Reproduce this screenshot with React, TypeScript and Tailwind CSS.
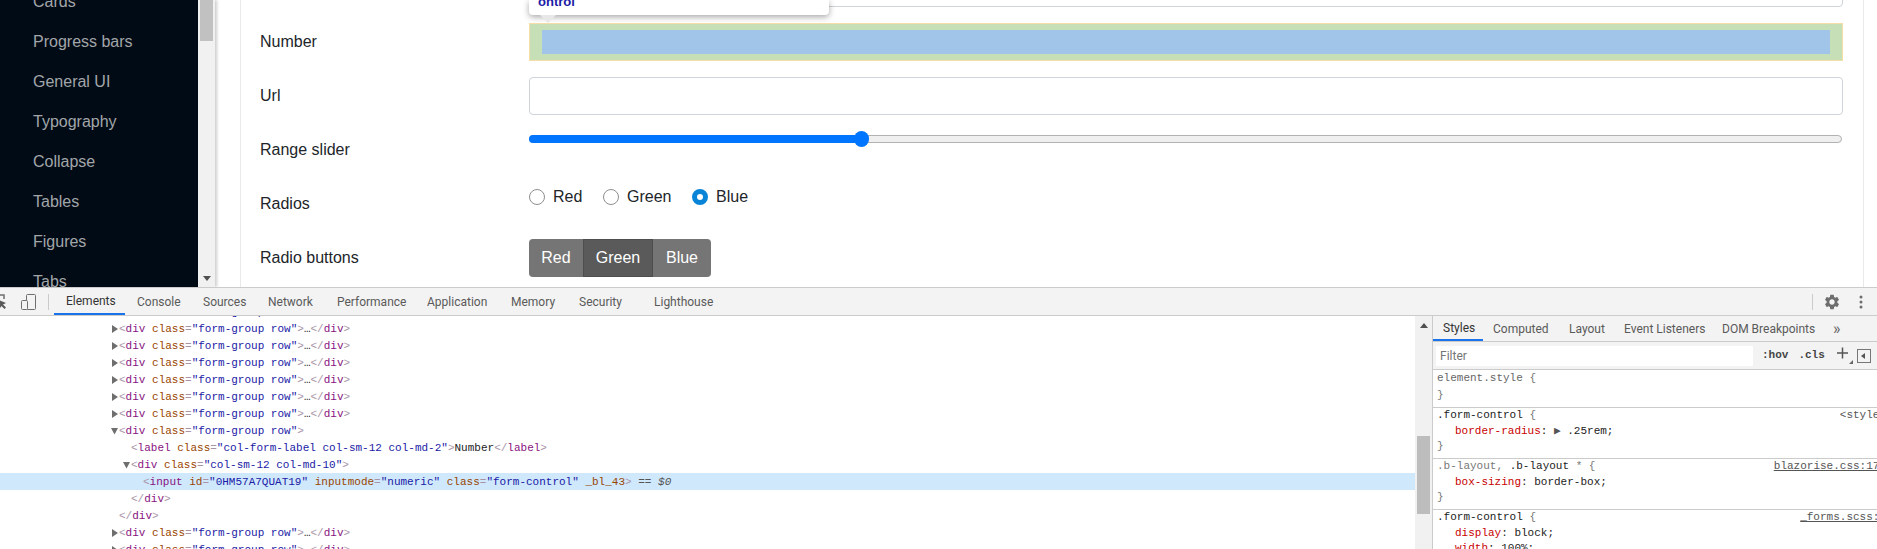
import React from "react";
import { MdSettings } from "react-icons/md";

const navItems = ["Cards", "Progress bars", "General UI", "Typography", "Collapse", "Tables", "Figures", "Tabs"];

const Caret = ({ open }: { open?: boolean }) => (
  <svg width="8" height="10" viewBox="0 0 8 10" className="shrink-0">
    {open ? <polygon points="0,2 7,2 3.5,8.5" fill="#6e6e6e" /> : <polygon points="1,1 7,5 1,9" fill="#6e6e6e" />}
  </svg>
);

const FormRow = ({ label, children }: { label: string; children?: React.ReactNode }) => (
  <div className="flex h-[38px] mb-4">
    <label className="w-[269px] shrink-0 pt-[7px] leading-6 text-[#212529]">{label}</label>
    <div className="flex-1 min-w-0">{children}</div>
  </div>
);

const TextBox = () => <div className="h-[38px] rounded border border-[#ced4da] bg-white" />;

const Radio = ({ label, checked, className }: { label: string; checked?: boolean; className: string }) => (
  <div className={`flex items-center h-6 ${className}`}>
    <span
      className={
        checked
          ? "w-4 h-4 rounded-full border-[5px] border-[#0a84d6] bg-white"
          : "w-4 h-4 rounded-full border border-[#8f8f8f] bg-white"
      }
    />
    <span className="ml-2 text-[#212529]">{label}</span>
  </div>
);

const Br = ({ children }: { children: React.ReactNode }) => <span className="text-[#a894a6]">{children}</span>;
const Tag = ({ children }: { children: React.ReactNode }) => <span className="text-[#881280]">{children}</span>;
const Attr = ({ children }: { children: React.ReactNode }) => <span className="text-[#994500]">{children}</span>;
const Val = ({ children }: { children: React.ReactNode }) => <span className="text-[#1a1aa6]">{children}</span>;

const TreeLine = ({ indent, children, caret, selected }: { indent: string; children: React.ReactNode; caret?: "open" | "closed"; selected?: boolean }) => (
  <div className={`flex items-center h-[17px] whitespace-pre ${indent} ${selected ? "bg-[#cfe8fc]" : ""}`}>
    {caret ? <Caret open={caret === "open"} /> : <span className="w-2 shrink-0" />}
    <span className="pt-px">{children}</span>
  </div>
);

const ClosedGroup = () => (
  <TreeLine indent="pl-[111px]" caret="closed">
    <Br>&lt;</Br><Tag>div</Tag> <Attr>class</Attr><Br>=</Br><Val>"form-group row"</Val><Br>&gt;</Br>…<Br>&lt;/</Br><Tag>div</Tag><Br>&gt;</Br>
  </TreeLine>
);

const tabs = [
  { name: "Elements", w: "w-[71px]", active: true },
  { name: "Console", w: "w-[66px]" },
  { name: "Sources", w: "w-[65px]" },
  { name: "Network", w: "w-[69px]" },
  { name: "Performance", w: "w-[90px]" },
  { name: "Application", w: "w-[84px]" },
  { name: "Memory", w: "w-[68px]" },
  { name: "Security", w: "w-[75px]" },
  { name: "Lighthouse", w: "w-[84px]" },
];

const sideTabs = [
  { name: "Styles", w: "w-[50px]", active: true },
  { name: "Computed", w: "w-[76px]" },
  { name: "Layout", w: "w-[55px]" },
  { name: "Event Listeners", w: "w-[98px]" },
  { name: "DOM Breakpoints", w: "w-[110px]" },
];

const Brace = ({ children }: { children: React.ReactNode }) => <span className="text-[#777]">{children}</span>;
const Prop = ({ children }: { children: React.ReactNode }) => <span className="text-[#c80000]">{children}</span>;

const Source = ({ children }: { children: React.ReactNode }) => (
  <span className="ml-auto mr-[-9px] text-[#555] underline">{children}</span>
);

export default function App() {
  return (
    <div className="w-full h-screen overflow-hidden flex flex-col bg-white font-['Liberation_Sans',Arial,sans-serif]">
      {/* page being inspected */}
      <div className="h-[287px] shrink-0 flex overflow-hidden">
        <div className="w-[198px] shrink-0 bg-[#000b16] text-[#a3a6a9]">
          <div className="mt-[-18px] pl-[33px]">
            {navItems.map((item) => (
              <div key={item} className="h-10 flex items-center">{item}</div>
            ))}
          </div>
        </div>
        <div className="w-[17px] shrink-0 bg-[#f1f1f1] flex flex-col items-center shadow-[2px_0_3px_rgba(0,0,0,0.2)]">
          <div className="w-[13px] h-[41px] bg-[#c1c1c1]" />
          <svg width="8" height="5" viewBox="0 0 8 5" className="mt-auto mb-[6px]">
            <polygon points="0,0 8,0 4,5" fill="#505050" />
          </svg>
        </div>
        <div className="relative flex-1 min-w-0 ml-[25px] mr-[13px] border-x border-[#e9e9e9] pl-[19px] pr-[20px]">
          <div className="mt-[-31px]">
            <FormRow label="Text"><TextBox /></FormRow>
            <FormRow label="Number">
              <div className="h-[38px] border border-[#f6dfa6] bg-[#c6dfb6] px-3 py-[6px]">
                <div className="h-6 bg-[#a1c5e9]" />
              </div>
            </FormRow>
            <FormRow label="Url"><TextBox /></FormRow>
            <FormRow label="Range slider">
              <div className="relative h-2 mt-1 mr-px rounded border border-[#b2b2b2] bg-[#efefef]">
                <div className="w-[332px] h-2 -mt-px -ml-px rounded-l bg-[#0075ff]" />
                <div className="absolute left-[324px] top-[-5px] w-[15px] h-4 rounded-full bg-[#0075ff]" />
              </div>
            </FormRow>
            <FormRow label="Radios">
              <div className="flex">
                <Radio label="Red" className="w-[74px]" />
                <Radio label="Green" className="w-[89px]" />
                <Radio label="Blue" checked className="" />
              </div>
            </FormRow>
            <FormRow label="Radio buttons">
              <div className="flex h-[38px] w-fit text-white">
                <div className="w-[54px] flex items-center justify-center rounded-l bg-[#757575]">Red</div>
                <div className="w-[70px] flex items-center justify-center border border-[#4e4e4e] bg-[#5a5a5a]">Green</div>
                <div className="w-[58px] flex items-center justify-center rounded-r bg-[#757575]">Blue</div>
              </div>
            </FormRow>
          </div>
          {/* inspector tooltip */}
          <div className="absolute left-[288px] top-0 w-[300px] h-[15px] rounded-b bg-white shadow-[0_2px_6px_rgba(0,0,0,0.35)] overflow-hidden">
            <div className="absolute left-[9px] bottom-[7px] text-[13px] leading-3 font-bold text-[#1a1aa6]">ontrol</div>
          </div>
          <svg width="16" height="8" viewBox="0 0 16 8" className="absolute left-[299px] top-[15px]">
            <polygon points="0,0 16,0 8,8" fill="#e8e8e8" />
          </svg>
        </div>
      </div>

      {/* devtools toolbar */}
      <div className="h-[29px] shrink-0 flex items-center border-y border-[#cbcbcb] bg-[#f3f3f3] font-['Roboto',sans-serif] text-xs text-[#5a5a5a]">
        <svg width="16" height="16" viewBox="0 0 16 16" className="ml-[-8px] shrink-0">
          <path d="M1 1h11v4" fill="none" stroke="#6e6e6e" strokeWidth="1.5" />
          <path d="M7 6l7 3-3 1.5 3 3-1.5 1.5-3-3L8 14z" fill="#5a5a5a" />
        </svg>
        <svg width="16" height="16" viewBox="0 0 16 16" className="ml-[13px] shrink-0">
          <rect x="5.5" y="0.5" width="9" height="15" rx="1" fill="none" stroke="#6e6e6e" />
          <rect x="0.5" y="6.5" width="6" height="9" rx="1" fill="#f3f3f3" stroke="#6e6e6e" />
        </svg>
        <div className="ml-[11px] w-px h-4 bg-[#cbcbcb]" />
        <div className="ml-[5px] flex h-full">
          {tabs.map((t) => (
            <div
              key={t.name}
              className={`${t.w} px-3 flex items-center whitespace-nowrap ${t.active ? "border-b-2 border-[#1a73e8] text-[#333]" : ""}`}
            >
              {t.name}
            </div>
          ))}
        </div>
        <div className="ml-auto w-px h-4 bg-[#cbcbcb]" />
        <MdSettings className="ml-[10px] w-[18px] h-[18px] text-[#6e6e6e]" />
        <svg width="4" height="14" viewBox="0 0 4 14" className="ml-[18px] mr-[14px]">
          <circle cx="2" cy="2" r="1.5" fill="#6e6e6e" />
          <circle cx="2" cy="7" r="1.5" fill="#6e6e6e" />
          <circle cx="2" cy="12" r="1.5" fill="#6e6e6e" />
        </svg>
      </div>

      {/* devtools body */}
      <div className="flex-1 min-h-0 flex overflow-hidden">
        <div className="w-[1415px] shrink-0 overflow-hidden font-['Liberation_Mono',monospace] text-[11px] text-[#222]">
          <div className="mt-[-13px]">
            <ClosedGroup />
            <ClosedGroup />
            <ClosedGroup />
            <ClosedGroup />
            <ClosedGroup />
            <ClosedGroup />
            <ClosedGroup />
            <TreeLine indent="pl-[111px]" caret="open">
              <Br>&lt;</Br><Tag>div</Tag> <Attr>class</Attr><Br>=</Br><Val>"form-group row"</Val><Br>&gt;</Br>
            </TreeLine>
            <TreeLine indent="pl-[123px]">
              <Br>&lt;</Br><Tag>label</Tag> <Attr>class</Attr><Br>=</Br><Val>"col-form-label col-sm-12 col-md-2"</Val><Br>&gt;</Br>Number<Br>&lt;/</Br><Tag>label</Tag><Br>&gt;</Br>
            </TreeLine>
            <TreeLine indent="pl-[123px]" caret="open">
              <Br>&lt;</Br><Tag>div</Tag> <Attr>class</Attr><Br>=</Br><Val>"col-sm-12 col-md-10"</Val><Br>&gt;</Br>
            </TreeLine>
            <TreeLine indent="pl-[135px]" selected>
              <Br>&lt;</Br><Tag>input</Tag> <Attr>id</Attr><Br>=</Br><Val>"0HM57A7QUAT19"</Val> <Attr>inputmode</Attr><Br>=</Br><Val>"numeric"</Val> <Attr>class</Attr><Br>=</Br><Val>"form-control"</Val> <Attr>_bl_43</Attr><Br>&gt;</Br><span className="text-[#555]"> == <i>$0</i></span>
            </TreeLine>
            <TreeLine indent="pl-[123px]">
              <Br>&lt;/</Br><Tag>div</Tag><Br>&gt;</Br>
            </TreeLine>
            <TreeLine indent="pl-[111px]">
              <Br>&lt;/</Br><Tag>div</Tag><Br>&gt;</Br>
            </TreeLine>
            <ClosedGroup />
            <ClosedGroup />
          </div>
        </div>

        <div className="w-[17px] shrink-0 bg-[#f1f1f1] flex flex-col items-center">
          <svg width="8" height="5" viewBox="0 0 8 5" className="mt-[7px]">
            <polygon points="0,5 8,5 4,0" fill="#505050" />
          </svg>
          <div className="w-[13px] h-[78px] mt-[108px] bg-[#bdbdbd]" />
        </div>

        <div className="flex-1 min-w-0 border-l border-[#cbcbcb] overflow-hidden">
          <div className="h-[26px] flex border-b border-[#cbcbcb] bg-[#f3f3f3] font-['Roboto',sans-serif] text-xs text-[#5a5a5a]">
            {sideTabs.map((t) => (
              <div
                key={t.name}
                className={`${t.w} px-[10px] flex items-center whitespace-nowrap ${t.active ? "border-b-2 border-[#1a73e8] text-[#333]" : ""}`}
              >
                {t.name}
              </div>
            ))}
            <span className="ml-[11px] flex items-center text-base leading-none text-[#666]">»</span>
          </div>
          <div className="h-[28px] flex items-center border-b border-[#cbcbcb] bg-[#f3f3f3] pl-[3px] text-[#444]">
            <div className="w-[317px] h-5 bg-white px-1 flex items-center font-['Roboto',sans-serif] text-xs text-[#757575]">Filter</div>
            <span className="ml-[9px] font-['Liberation_Mono',monospace] text-[11px] font-bold">:hov</span>
            <span className="ml-[10px] font-['Liberation_Mono',monospace] text-[11px] font-bold">.cls</span>
            <svg width="18" height="18" viewBox="0 0 18 18" className="ml-[11px] shrink-0">
              <path d="M6.5 0.5v11M1 6h11" stroke="#555" strokeWidth="1.5" />
              <polygon points="17,13 17,17 13,17" fill="#666" />
            </svg>
            <svg width="14" height="14" viewBox="0 0 14 14" className="ml-[3px] shrink-0">
              <rect x="0.5" y="0.5" width="13" height="13" fill="none" stroke="#777" />
              <polygon points="8,4 8,10 4,7" fill="#555" />
            </svg>
          </div>
          <div className="font-['Liberation_Mono',monospace] text-[11px] text-[#222] whitespace-pre">
            <div className="h-[38px] border-b border-[#cbcbcb] pl-[4px] leading-[17px] text-[#666]">
              <div>element.style <Brace>{"{"}</Brace></div>
              <div><Brace>{"}"}</Brace></div>
            </div>
            <div className="h-[51px] border-b border-[#cbcbcb] pl-[4px] leading-[15.5px]">
              <div className="flex"><span>.form-control <Brace>{"{"}</Brace></span><span className="ml-auto mr-[-9px] text-[#555]">&lt;style&gt;</span></div>
              <div className="pl-[18px]"><Prop>border-radius</Prop>: <span className="text-[#555]">▶</span> .25rem;</div>
              <div><Brace>{"}"}</Brace></div>
            </div>
            <div className="h-[51px] border-b border-[#cbcbcb] pl-[4px] leading-[15.5px]">
              <div className="flex"><span className="text-[#777]">.b-layout, <span className="text-[#222]">.b-layout</span> * {"{"}</span><Source>blazorise.css:170</Source></div>
              <div className="pl-[18px]"><Prop>box-sizing</Prop>: border-box;</div>
              <div><Brace>{"}"}</Brace></div>
            </div>
            <div className="pl-[4px] leading-[15.5px]">
              <div className="flex"><span>.form-control <Brace>{"{"}</Brace></span><Source>_forms.scss:1</Source></div>
              <div className="pl-[18px]"><Prop>display</Prop>: block;</div>
              <div className="pl-[18px]"><Prop>width</Prop>: 100%;</div>
            </div>
          </div>
        </div>
      </div>
    </div>
  );
}
